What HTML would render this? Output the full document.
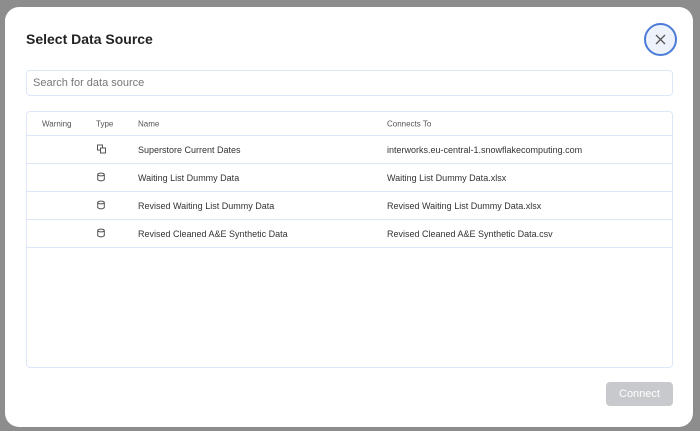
<!DOCTYPE html>
<html><head><style>
body{margin:0;width:700px;height:431px;background:#8d8d8e;font-family:"Liberation Sans",sans-serif;position:relative;overflow:hidden}
.m{position:absolute;left:5px;top:7px;width:688px;height:420px;background:#fff;border-radius:14px}
.t{position:absolute;left:21px;top:24px;font-size:14px;font-weight:bold;color:#222}
.x{position:absolute;left:639px;top:16px;width:29px;height:29px;border:2px solid #4a7bd8;border-radius:50%;background:#eef2fb}
.s{position:absolute;left:21px;top:63px;width:645px;height:24px;border:1px solid #dde7f8;border-radius:4px;font-size:11px;color:#777;line-height:24px;padding-left:6px;box-sizing:content-box;width:639px}
.tb{position:absolute;left:21px;top:104px;width:645px;height:255px;border:1px solid #dde7f8;border-radius:4px}
.r{position:absolute;left:0;width:645px;border-bottom:1px solid #dde7f8;font-size:9px;color:#333}
.r span{position:absolute;top:50%;transform:translateY(-50%);white-space:nowrap}
.h span{font-size:8px;color:#555}
.b{position:absolute;left:601px;top:375px;width:67px;height:24px;background:#c8c9cc;border-radius:4px;color:#fff;font-size:11px;text-align:center;line-height:24px}
</style></head><body>
<div class="m">
<div class="t">Select Data Source</div>
<div class="x"><svg width="29" height="29"><path d="M10 10L19 19M19 10L10 19" stroke="#555" stroke-width="1.3"/></svg></div>
<div class="s">Search for data source</div>
<div class="tb">
<div class="r h" style="top:0;height:23px"><span style="left:15px">Warning</span><span style="left:69px">Type</span><span style="left:111px">Name</span><span style="left:360px">Connects To</span></div>
<div class="r" style="top:24px;height:27px"><span style="left:70px"><svg width="9" height="9"><rect x="0.5" y="0.5" width="5" height="5" fill="none" stroke="#555"/><rect x="3.5" y="3.5" width="5" height="5" fill="#fff" stroke="#555"/></svg></span><span style="left:111px">Superstore Current Dates</span><span style="left:360px">interworks.eu-central-1.snowflakecomputing.com</span></div>
<div class="r" style="top:52px;height:27px"><span style="left:70px"><svg width="8" height="9"><ellipse cx="4" cy="2" rx="3.3" ry="1.4" fill="none" stroke="#555"/><path d="M0.7 2V7.2Q4 9.6 7.3 7.2V2" fill="none" stroke="#555"/></svg></span><span style="left:111px">Waiting List Dummy Data</span><span style="left:360px">Waiting List Dummy Data.xlsx</span></div>
<div class="r" style="top:80px;height:27px"><span style="left:70px"><svg width="8" height="9"><ellipse cx="4" cy="2" rx="3.3" ry="1.4" fill="none" stroke="#555"/><path d="M0.7 2V7.2Q4 9.6 7.3 7.2V2" fill="none" stroke="#555"/></svg></span><span style="left:111px">Revised Waiting List Dummy Data</span><span style="left:360px">Revised Waiting List Dummy Data.xlsx</span></div>
<div class="r" style="top:108px;height:27px"><span style="left:70px"><svg width="8" height="9"><ellipse cx="4" cy="2" rx="3.3" ry="1.4" fill="none" stroke="#555"/><path d="M0.7 2V7.2Q4 9.6 7.3 7.2V2" fill="none" stroke="#555"/></svg></span><span style="left:111px">Revised Cleaned A&amp;E Synthetic Data</span><span style="left:360px">Revised Cleaned A&amp;E Synthetic Data.csv</span></div>
</div>
<div class="b">Connect</div>
</div>
</body></html>
